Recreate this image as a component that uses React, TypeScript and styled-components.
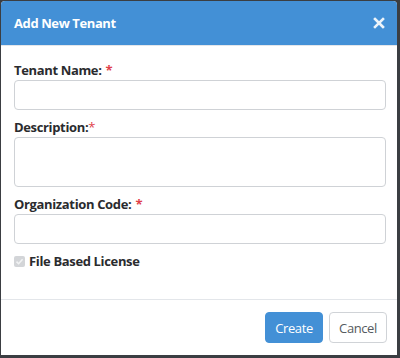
import React, { FC } from 'react';
import styled, { createGlobalStyle } from 'styled-components';

const GlobalStyle = createGlobalStyle`
  html, body {
    margin: 0;
    padding: 0;
    background: #3b3e42;
    width: 400px;
    height: 358px;
    overflow: hidden;
    font-family: "Open Sans", "Noto Sans", Arial, sans-serif;
  }
`;

const Modal = styled.div`
  margin: 1px 0 0 1px;
  width: 396px;
  height: 354px;
  background: #fff;
  border-radius: 4px 4px 0 0;
  display: flex;
  flex-direction: column;
  overflow: hidden;
`;

const Header = styled.div`
  height: 44px;
  background: #4390d6;
  border-bottom: 1px solid #e3e6ea;
  display: flex;
  align-items: center;
  justify-content: space-between;
  padding: 0 12px 0 13px;
`;

const Title = styled.h4`
  margin: 0;
  color: #fff;
  font-size: 13px;
  font-weight: 700;
  letter-spacing: -0.4px;
`;

const Close = styled.button`
  border: 0;
  background: none;
  padding: 0;
  width: 12px;
  height: 12px;
  opacity: 0.9;
  display: flex;
`;

const Body = styled.div`
  flex: 1;
  padding: 15px 11px 0 13px;
  display: flex;
  flex-direction: column;
`;

const Field = styled.div`
  display: flex;
  flex-direction: column;
  margin-bottom: 8px;
`;

const Label = styled.label`
  color: #2a2b2e;
  font-size: 13px;
  font-weight: 700;
  line-height: 18px;
  margin-bottom: 1px;
  letter-spacing: -0.35px;
`;

const Req = styled.span<{ $tight?: boolean }>`
  color: #e0414a;
  margin-left: ${(p) => (p.$tight ? '0' : '4px')};
  font-weight: ${(p) => (p.$tight ? 400 : 700)};
`;

const Input = styled.input`
  box-sizing: border-box;
  height: 30px;
  width: 100%;
  border: 1px solid #cfd2d6;
  border-radius: 4px;
  padding: 4px 8px;
  font-family: inherit;
`;

const TextArea = styled.textarea`
  box-sizing: border-box;
  height: 50px;
  width: 100%;
  border: 1px solid #cfd2d6;
  border-radius: 4px;
  resize: none;
  font-family: inherit;
`;

const CheckRow = styled.div`
  display: flex;
  align-items: center;
  gap: 4px;
  margin-top: 0;
  color: #2a2b2e;
  font-size: 13px;
  font-weight: 700;
  letter-spacing: -0.35px;
`;

const Box = styled.span`
  width: 11px;
  height: 11px;
  border-radius: 2px;
  background: #d3d5d8;
  display: flex;
  align-items: center;
  justify-content: center;
`;

const Footer = styled.div`
  border-top: 1px solid #e3e6ea;
  height: 55px;
  display: flex;
  justify-content: flex-end;
  align-items: center;
  gap: 6px;
  padding: 0 10px 0 0;
`;

const Button = styled.button<{ $primary?: boolean }>`
  height: 31px;
  width: 58px;
  padding: 0;
  border-radius: 4px;
  font-family: inherit;
  font-size: 13px;
  letter-spacing: -0.4px;
  border: 1px solid ${(p) => (p.$primary ? '#4390d6' : '#d0d3d7')};
  background: ${(p) => (p.$primary ? '#4390d6' : '#fff')};
  color: ${(p) => (p.$primary ? '#fff' : '#555a60')};
`;

const App: FC = () => (
  <>
    <GlobalStyle />
    <Modal>
      <Header>
        <Title>Add New Tenant</Title>
        <Close aria-label="close">
          <svg width="12" height="12" viewBox="0 0 12 12">
            <path d="M2 2 L10 10 M10 2 L2 10" stroke="#fff" strokeWidth="2.6" strokeLinecap="square" />
          </svg>
        </Close>
      </Header>
      <Body>
        <Field>
          <Label>
            Tenant Name:<Req>*</Req>
          </Label>
          <Input />
        </Field>
        <Field>
          <Label>
            Description:<Req $tight>*</Req>
          </Label>
          <TextArea />
        </Field>
        <Field>
          <Label>
            Organization Code:<Req>*</Req>
          </Label>
          <Input />
        </Field>
        <CheckRow>
          <Box>
            <svg width="9" height="9" viewBox="0 0 9 9">
              <path d="M1.5 4.6 L3.6 6.7 L7.6 2.2" fill="none" stroke="#f2f3f4" strokeWidth="1.6" />
            </svg>
          </Box>
          File Based License
        </CheckRow>
      </Body>
      <Footer>
        <Button $primary>Create</Button>
        <Button>Cancel</Button>
      </Footer>
    </Modal>
  </>
);

export default App;
